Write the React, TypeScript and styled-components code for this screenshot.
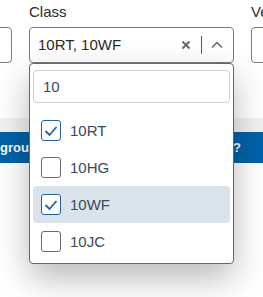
import React, { FC } from 'react';
import styled, { createGlobalStyle } from 'styled-components';

const GlobalStyle = createGlobalStyle`
  html, body {
    margin: 0;
    padding: 0;
    background: #fff;
  }
  * {
    box-sizing: border-box;
  }
`;

const Page = styled.div`
  position: relative;
  width: 263px;
  height: 297px;
  overflow: hidden;
  background: #fff;
  font-family: 'Liberation Sans', Arial, sans-serif;
`;

const FieldRow = styled.div`
  display: flex;
  gap: 17px;
  margin: 2px 0 0 -193px;
`;

const Field = styled.div`
  position: relative;
  flex: 0 0 205px;
`;

const Label = styled.div`
  min-height: 20px;
  font-size: 15px;
  line-height: 20px;
  color: #2b2b2b;
  margin-bottom: 5px;
  white-space: nowrap;
`;

const Control = styled.div`
  display: flex;
  align-items: center;
  height: 36px;
  padding: 0 10px 0 8px;
  border: 1px solid #7d7d7d;
  border-radius: 4px;
  background: #fff;
`;

const Value = styled.div`
  flex: 1;
  font-size: 15px;
  color: #2e2a26;
  margin-top: -2px;
`;

const Indicators = styled.div`
  display: flex;
  align-items: center;
  margin-top: -1px;
`;

const Separator = styled.span`
  width: 1px;
  height: 18px;
  margin: 0 9px 0 10px;
  background: #2764a6;
`;

const Strip = styled.div`
  margin-top: 55px;
  height: 14px;
  background: #f1f1f1;
`;

const Bar = styled.div`
  display: flex;
  align-items: center;
  justify-content: space-between;
  height: 31px;
  padding: 0 22px 0 0;
  background: #0062a9;
  color: #fff;
  font-size: 13px;
  font-weight: bold;
`;

const Menu = styled.div`
  position: absolute;
  top: 100%;
  left: 0;
  width: 205px;
  height: 201px;
  padding: 6px 3px 3px;
  border: 1px solid #666;
  border-radius: 4px;
  background: #fff;
  box-shadow: 0 14px 34px rgba(0, 0, 0, 0.28);
  z-index: 2;
`;

const Search = styled.div`
  height: 33px;
  display: flex;
  align-items: center;
  padding: 0 9px;
  border: 1px solid #cfcfcf;
  border-radius: 4px;
  font-size: 15px;
  color: #3a4a5e;
`;

const Options = styled.div`
  margin-top: 9px;
  display: flex;
  flex-direction: column;
`;

const Option = styled.div<{ $active?: boolean }>`
  display: flex;
  align-items: center;
  gap: 9px;
  height: 37px;
  padding-left: 8px;
  border-radius: 4px;
  background: ${(p) => (p.$active ? '#dbe3ea' : 'transparent')};
  font-size: 15px;
  color: #3a4a5e;
`;

const Box = styled.span<{ $checked?: boolean }>`
  display: flex;
  align-items: center;
  justify-content: center;
  width: 20px;
  height: 21px;
  border: 1px solid ${(p) => (p.$checked ? '#1f62a8' : '#6b6b6b')};
  border-radius: 3px;
  background: #fff;
`;

const Check = () => (
  <svg width="14" height="12" viewBox="0 0 14 12">
    <polyline points="1.5,6 5.5,10 12.5,2" fill="none" stroke="#1f62a8" strokeWidth="1.8" />
  </svg>
);

const ClearIcon = () => (
  <svg width="10" height="10" viewBox="0 0 10 10">
    <path d="M1.5 1.5 L8.5 8.5 M8.5 1.5 L1.5 8.5" stroke="#666" strokeWidth="1.8" />
  </svg>
);

const ChevronUp = () => (
  <svg width="12" height="8" viewBox="0 0 12 8">
    <polyline points="1,6.5 6,1.5 11,6.5" fill="none" stroke="#666" strokeWidth="1.5" />
  </svg>
);

const CLASSES = [
  { name: '10RT', checked: true },
  { name: '10HG', checked: false },
  { name: '10WF', checked: true, active: true },
  { name: '10JC', checked: false },
];

const App: FC = () => (
  <Page>
    <GlobalStyle />
    <FieldRow>
      <Field>
        <Label />
        <Control />
      </Field>
      <Field>
        <Label>Class</Label>
        <Control>
          <Value>10RT, 10WF</Value>
          <Indicators>
            <ClearIcon />
            <Separator />
            <ChevronUp />
          </Indicators>
        </Control>
        <Menu>
          <Search>10</Search>
          <Options>
            {CLASSES.map((c) => (
              <Option key={c.name} $active={c.active}>
                <Box $checked={c.checked}>{c.checked && <Check />}</Box>
                {c.name}
              </Option>
            ))}
          </Options>
        </Menu>
      </Field>
      <Field>
        <Label>Version</Label>
        <Control />
      </Field>
    </FieldRow>
    <Strip />
    <Bar>
      <span>group</span>
      <span>?</span>
    </Bar>
  </Page>
);

export default App;
